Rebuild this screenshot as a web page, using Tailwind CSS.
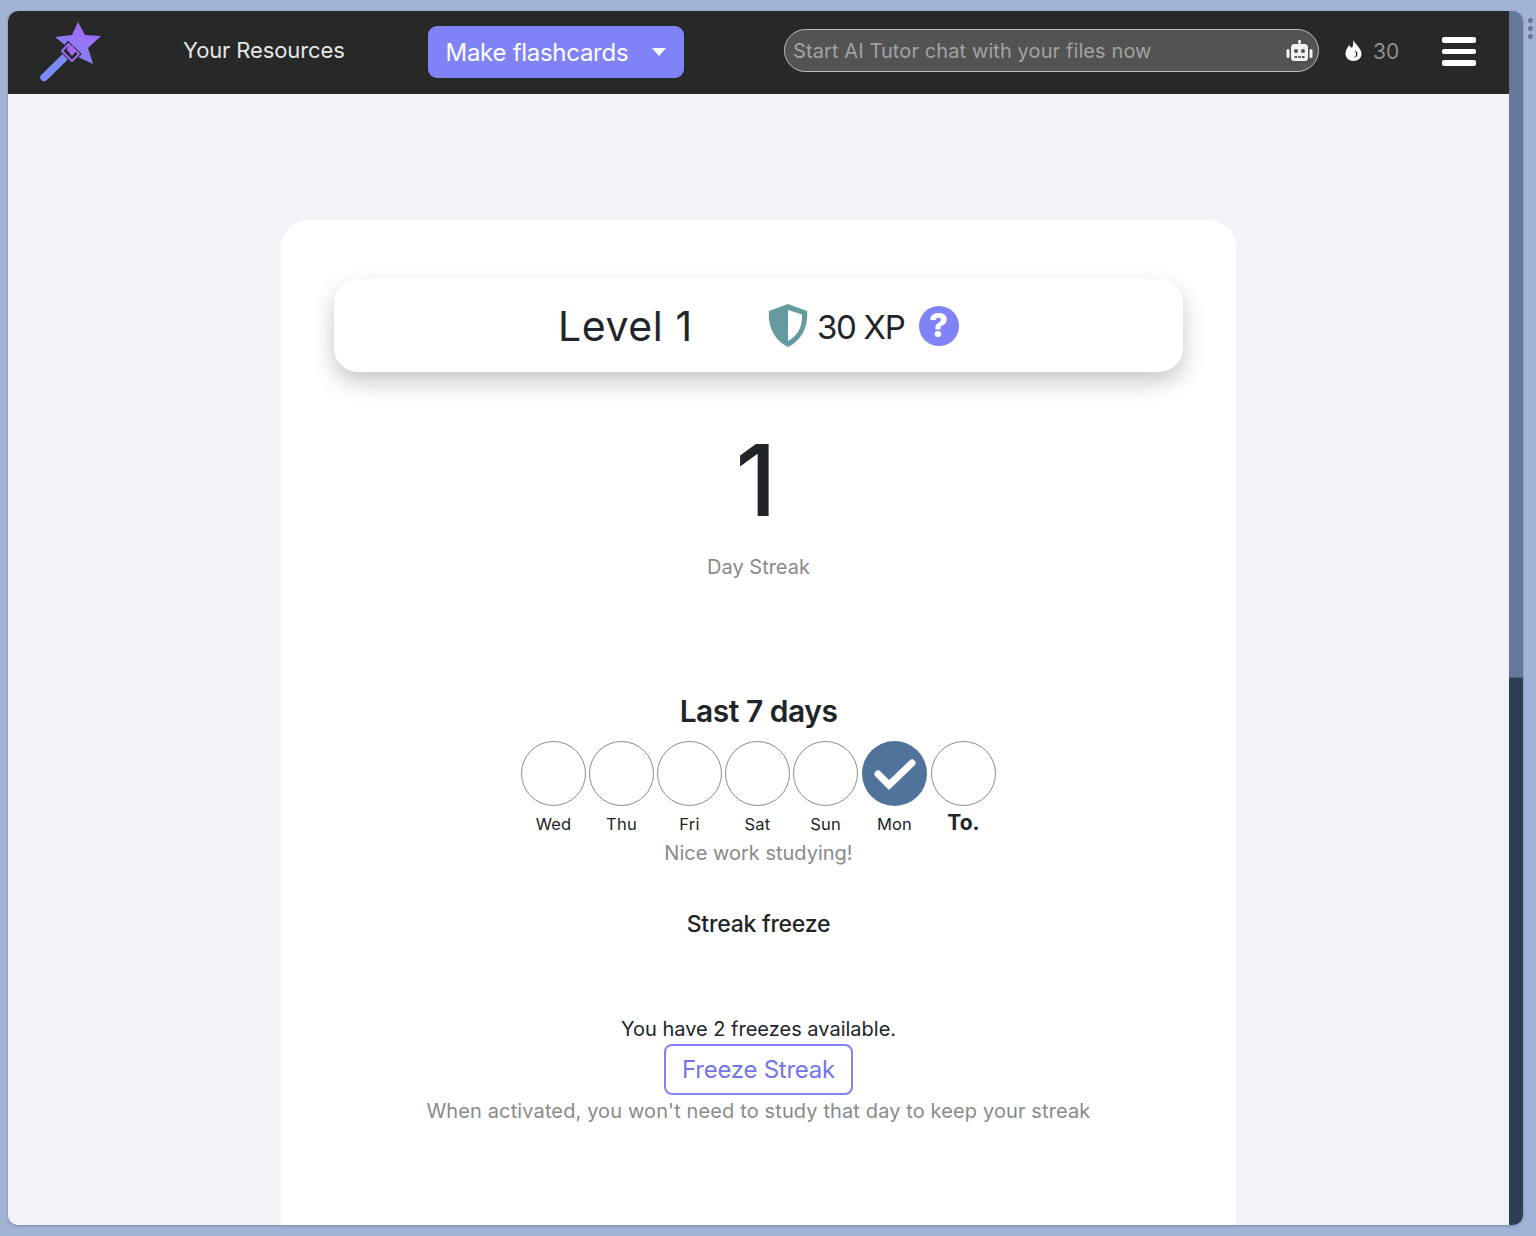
<!DOCTYPE html>
<html><head><meta charset="utf-8"><script src="https://cdn.jsdelivr.net/npm/@tailwindcss/browser@4"></script></head>
<body class="m-0 overflow-hidden">
<div class="relative h-[1236px] w-[1536px] overflow-hidden bg-[#a2b4d6] pl-2 pt-[11px] font-['Inter',sans-serif]">
  <div class="absolute right-[3px] top-[18px] flex flex-col gap-[3px]">
    <span class="size-[5px] rounded-full bg-[#6b7a94]"></span><span class="size-[5px] rounded-full bg-[#6b7a94]"></span><span class="size-[5px] rounded-full bg-[#6b7a94]"></span>
  </div>
  <div class="flex h-[1214px] w-[1515px] overflow-hidden rounded-[10px] shadow-[0_1px_3px_rgba(40,50,80,0.35)]">
    <div class="flex w-[1501px] flex-col bg-[#f3f4f9]">
      <header class="flex h-[83px] shrink-0 items-center bg-[#272928]">
        <svg class="mb-[1px] ml-[31px] h-[62px] w-[64px] shrink-0" viewBox="0 0 64 62">
          <defs><linearGradient id="g" x1="0.7" y1="0" x2="0.2" y2="1"><stop offset="0" stop-color="#a765f5"/><stop offset="1" stop-color="#7b8bfb"/></linearGradient></defs>
          <path fill="url(#g)" d="M39 1 L46 14 L62 15 L49 27 L54 43 L39 36 L24 38 L26 24 L16 16 L33 14 Z"/>
          <path fill="none" stroke="#7b8bfb" stroke-width="7.500" stroke-linecap="round" d="M26 36 L5 56.500"/>
          <path fill="#272928" stroke="#272928" stroke-width="2.500" d="M22 30 L29 21.500 L41 33 L33 41 Z"/>
          <path fill="none" stroke="#a267f5" stroke-width="2" stroke-linejoin="round" d="M23 30 L29.500 23 L40 33 L33 40 Z"/>
          <path fill="#a56bf6" d="M28 29 L29 24.500 L32 26.500 L33.500 24.500 L35 28 L37 30 L33 35 Z"/>
        </svg>
        <span class="mb-[4px] ml-[80px] w-[245px] shrink-0 text-[22px] tracking-[-0.12px] text-[#e6e6e6]">Your Resources</span>
        <button class="mb-[2px] flex h-[52px] w-[256px] shrink-0 items-center justify-between rounded-[9px] bg-[#7f83f7] pr-[18px] pl-[17.500px] text-[24px] tracking-[-0.28px] text-white">
          <span class="mt-[2px]">Make flashcards</span>
          <svg class="h-[8px] w-[14px]" viewBox="0 0 14 8"><path fill="#fff" d="M0 0h14L7 8z"/></svg>
        </button>
        <div class="mb-[4px] ml-[100px] flex h-[43px] w-[535px] shrink-0 items-center justify-between rounded-full border border-[#bdbdbd] bg-[#525352] pr-[5px] pl-2">
          <span class="text-[20px] tracking-[0.1px] text-[#a2a2a2]">Start AI Tutor chat with your files now</span>
          <svg class="h-[22px] w-[27px]" viewBox="0 0 27 22" fill="#f2f2f2">
            <rect x="5" y="4" width="17" height="17" rx="3.500"/><rect x="12.500" y="0" width="2" height="5"/><circle cx="13.500" cy="1.500" r="1.500"/><rect x="0.500" y="9" width="3" height="9" rx="1.500"/><rect x="23.500" y="9" width="3" height="9" rx="1.500"/>
            <circle cx="10" cy="11" r="2" fill="#525352"/><circle cx="17" cy="11" r="2" fill="#525352"/><rect x="8.500" y="16" width="2.500" height="2" fill="#525352"/><rect x="12.300" y="16" width="2.500" height="2" fill="#525352"/><rect x="16" y="16" width="2.500" height="2" fill="#525352"/>
          </svg>
        </div>
        <svg class="mb-[4px] ml-[26px] h-[21px] w-[17px] shrink-0" viewBox="0 0 16 21"><path fill="#fff" d="M8 0 C9 4 16 8 16 14 C16 18 12.500 21 8 21 C3.500 21 0 18 0 13.500 C0 10 2 7 4 5 C5 8 6 8 7 7 C8 5 7.500 2 8 0Z"/><path fill="#272928" d="M9.500 10 C9.500 12 11 13 10.500 15 C10 16.500 9 17.300 8 17.500 C10 18 12 16.500 12 14 C12 12 10.500 11 9.500 10Z"/></svg>
        <span class="mb-[2px] ml-[11px] w-[69px] shrink-0 text-[21px] text-[#8f8f8f]">30</span>
        <div class="mb-[2px] flex w-[34px] shrink-0 flex-col gap-[6px]">
          <span class="h-[5.500px] rounded-[2px] bg-white"></span><span class="h-[5.500px] rounded-[2px] bg-white"></span><span class="h-[5.500px] rounded-[2px] bg-white"></span>
        </div>
      </header>
      <main class="flex-1 pt-[126px] pl-[273px]">
        <section class="flex h-[1100px] w-[955px] flex-col items-center rounded-[28px] bg-white px-[53px] pt-[59px]">
          <div class="flex h-[93px] w-full shrink-0 items-center rounded-[24px] bg-white pl-[224px] shadow-[0_10px_22px_rgba(0,0,0,0.22)]">
            <span class="mt-[2px] w-[210px] text-[41px] tracking-[0.6px] text-[#212529]">Level 1</span>
            <svg class="h-[43px] w-[40px]" viewBox="0 0 40 43"><path fill="#659ba0" d="M20 0 L39 7 C40 20 36 35 20 43 C4 35 0 20 1 7 Z"/><path fill="#fff" d="M20 6 L34 10.500 C34.500 21 31 31 20 37 Z"/></svg>
            <span class="mt-[4px] ml-[9px] text-[33px] tracking-[-1.3px] text-[#212529]">30 XP</span>
            <span class="ml-[14px] flex size-[40px] items-center justify-center rounded-full bg-[#7f83f7] text-[33px] leading-none font-extrabold text-white">?</span>
          </div>
          <div class="mt-[50px] mr-[5px] h-[117px] text-[99px] leading-[117px] font-medium text-[#212529]">1</div>
          <div class="mt-[12px] h-[32px] text-[20px] leading-[32px] text-[#8a8a8a]">Day Streak</div>
          <h2 class="mt-[108px] h-[40px] text-[30px] leading-[40px] font-semibold tracking-[-0.5px] text-[#212529]">Last 7 days</h2>
          <div class="mt-[10px] grid grid-cols-[66px_66px_66px_66px_66px_68px_66px] gap-x-[2px] text-center text-[#212529]">
            <div class="mx-auto size-[65px] rounded-full border-[1.500px] border-[#8a8a8a]"></div>
            <div class="mx-auto size-[65px] rounded-full border-[1.500px] border-[#8a8a8a]"></div>
            <div class="mx-auto size-[65px] rounded-full border-[1.500px] border-[#8a8a8a]"></div>
            <div class="mx-auto size-[65px] rounded-full border-[1.500px] border-[#8a8a8a]"></div>
            <div class="mx-auto size-[65px] rounded-full border-[1.500px] border-[#8a8a8a]"></div>
            <div class="mx-auto flex size-[65px] items-center justify-center rounded-full bg-[#50739b]">
              <svg class="h-[32px] w-[42px]" viewBox="0 0 42 32"><path fill="none" stroke="#fff" stroke-width="7" stroke-linecap="round" stroke-linejoin="miter" d="M4 16 L15 27 L38 5"/></svg>
            </div>
            <div class="mx-auto size-[65px] rounded-full border-[1.500px] border-[#8a8a8a]"></div>
            <div class="mt-[4px] h-[28px] text-[16.500px] leading-[28px] tracking-[0.2px]">Wed</div>
            <div class="mt-[4px] h-[28px] text-[16.500px] leading-[28px] tracking-[0.2px]">Thu</div>
            <div class="mt-[4px] h-[28px] text-[16.500px] leading-[28px] tracking-[0.2px]">Fri</div>
            <div class="mt-[4px] h-[28px] text-[16.500px] leading-[28px] tracking-[0.2px]">Sat</div>
            <div class="mt-[4px] h-[28px] text-[16.500px] leading-[28px] tracking-[0.2px]">Sun</div>
            <div class="mt-[4px] h-[28px] text-[16.500px] leading-[28px] tracking-[0.2px]">Mon</div>
            <div class="mt-[4px] h-[28px] text-[21px] leading-[26px] font-bold">To.</div>
          </div>
          <div class="mt-[-1px] h-[32px] text-[20px] leading-[32px] text-[#8a8a8a]">Nice work studying!</div>
          <h3 class="mt-[37px] h-[36px] text-[23px] leading-[36px] font-medium tracking-[-0.25px] text-[#212529]">Streak freeze</h3>
          <div class="mt-[71px] h-[32px] text-[20px] leading-[32px] text-[#212529]">You have 2 freezes available.</div>
          <button class="mt-[-1px] flex h-[51px] w-[189px] items-center justify-center rounded-[8px] border-[2.500px] border-[#7f83f7] text-[24px] tracking-[-0.25px] text-[#7276e8]">Freeze Streak</button>
          <div class="h-[32px] text-[20px] leading-[32px] tracking-[0.12px] text-[#8a8a8a]">When activated, you won't need to study that day to keep your streak</div>
        </section>
      </main>
    </div>
    <div class="flex w-[14px] flex-col">
      <div class="h-[666px] shrink-0 bg-[#64789a]"></div>
      <div class="flex-1 border-t border-[#4f6076] bg-[#2a3f52]"></div>
    </div>
  </div>
</div>
</body></html>
